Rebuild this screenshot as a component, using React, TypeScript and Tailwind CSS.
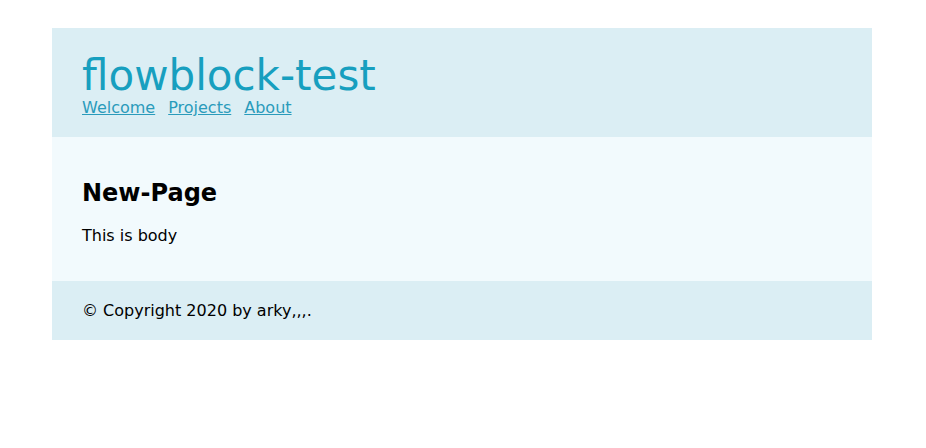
export default function App() {
  return (
    <div className="min-h-screen bg-white pt-[28px]" style={{ fontFamily: '"DejaVu Sans", sans-serif' }}>
      <div className="mx-[52px] w-[820px]">
        <header className="bg-[#dbeef4] px-[30px] pt-[26px] pb-[20px]">
          <h1 className="text-[42px] leading-[44px] text-[#179fbf]">flowblock-test</h1>
          <nav className="flex gap-[13px] text-[16px] leading-[19px] text-[#2a9bbb]">
            <a href="#" className="underline">Welcome</a>
            <a href="#" className="underline">Projects</a>
            <a href="#" className="underline">About</a>
          </nav>
        </header>
        <main className="bg-[#f2fafd] px-[30px] pt-[38px] pb-[33px]">
          <h2 className="text-[24px] font-bold leading-[36px] text-black">New-Page</h2>
          <p className="mt-[13px] text-[16px] leading-6 text-black">This is body</p>
        </main>
        <footer className="bg-[#dbeef4] px-[30px] pt-[18px] pb-[17px]">
          <p className="text-[16px] leading-6 text-black">© Copyright 2020 by arky,,,.</p>
        </footer>
      </div>
    </div>
  );
}
